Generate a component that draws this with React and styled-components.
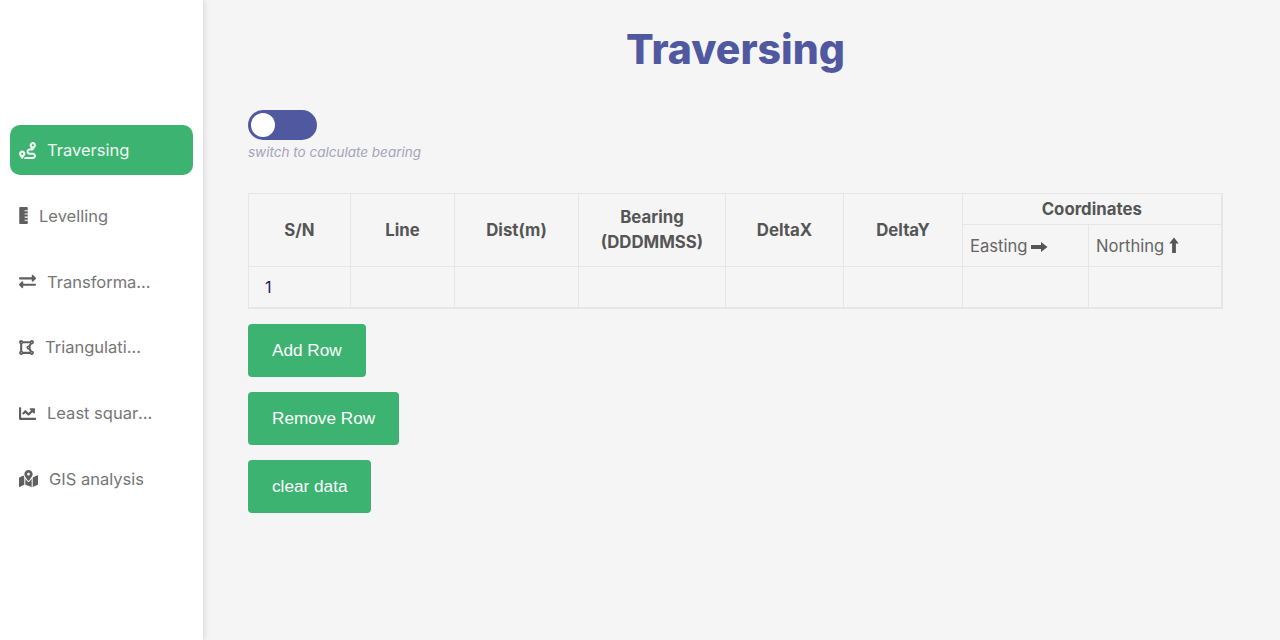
import React from "react";
import styled, { createGlobalStyle } from "styled-components";
import {
  FaRoute,
  FaRulerVertical,
  FaExchangeAlt,
  FaDrawPolygon,
  FaChartLine,
  FaMapMarkedAlt,
} from "react-icons/fa";

const GlobalStyle = createGlobalStyle`
  html, body {
    margin: 0;
    padding: 0;
    background: #f5f5f5;
    font-family: "Inter", "Open Sans", sans-serif;
  }
`;

const Page = styled.div`
  display: flex;
  width: 1280px;
  height: 640px;
  overflow: hidden;
`;

const Sidebar = styled.nav`
  display: flex;
  flex-direction: column;
  gap: 15.8px;
  flex: 0 0 203px;
  box-sizing: border-box;
  padding: 125px 10px 0;
  background: #ffffff;
  box-shadow: 2px 0 5px rgba(0, 0, 0, 0.1);
`;

const NavItem = styled.a`
  display: flex;
  align-items: center;
  gap: 11px;
  height: 50px;
  padding-left: 9px;
  border-radius: 10px;
  font-size: 16.5px;
  background: ${(p) => (p.$active ? "#3cb371" : "transparent")};
  color: ${(p) => (p.$active ? "#f0f8f3" : "#767676")};
  svg {
    flex: none;
    width: ${(p) => p.$iconWidth}px;
    height: 17px;
    color: ${(p) => (p.$active ? "#f0f8f3" : "#5f5f5f")};
  }
`;

const NavLabel = styled.span`
  max-width: ${(p) => p.$clip || 120}px;
  white-space: nowrap;
  overflow: hidden;
  text-overflow: ellipsis;
`;

const Main = styled.main`
  flex: 1;
  padding: 0 57px 0 45px;
`;

const Title = styled.h1`
  margin: 0;
  padding-top: 24px;
  text-align: center;
  font-size: 41px;
  line-height: 50px;
  font-weight: 800;
  color: #5059a0;
`;

const SwitchBlock = styled.div`
  margin-top: 36px;
`;

const Toggle = styled.div`
  display: flex;
  align-items: center;
  box-sizing: border-box;
  width: 69px;
  height: 30px;
  padding-left: 3px;
  border-radius: 15px;
  background: #5059a0;
`;

const Knob = styled.div`
  width: 24px;
  height: 24px;
  border-radius: 50%;
  background: #ffffff;
`;

const Hint = styled.p`
  margin: 3px 0 0;
  font-size: 13.5px;
  line-height: 18px;
  font-style: italic;
  color: #a3a3bc;
`;

const Table = styled.table`
  width: 974px;
  margin-top: 32px;
  border-collapse: collapse;
  table-layout: fixed;
  color: #555555;
  border-style: solid;
  border-color: #e6e6e6;
  border-width: 1px 2px 2px 1px;
`;

const Head = styled.th`
  padding: 0;
  border: 1px solid #e6e6e6;
  font-size: 16.8px;
  line-height: 25px;
  font-weight: 700;
  text-align: center;
`;

const SubHead = styled.td`
  height: 41px;
  padding: 0 0 0 7px;
  border: 1px solid #e6e6e6;
  font-size: 16.6px;
  color: #666666;
  svg {
    margin-left: -1px;
    vertical-align: -1px;
    fill: #555555;
  }
`;

const Cell = styled.td`
  height: 40px;
  padding: 0 0 0 16px;
  border: 1px solid #e6e6e6;
  font-size: 16px;
  color: #1a1a70;
`;

const Actions = styled.div`
  display: flex;
  flex-direction: column;
  align-items: flex-start;
  gap: 15px;
  margin-top: 15px;
`;

const Button = styled.button`
  height: 53px;
  padding: 0 24px;
  border: none;
  border-radius: 4px;
  background: #3cb371;
  color: #ffffff;
  font-family: "Liberation Sans", Arial, sans-serif;
  font-size: 17.2px;
`;

const links = [
  { icon: FaRoute, label: "Traversing", width: 17, active: true },
  { icon: FaRulerVertical, label: "Levelling", width: 9 },
  { icon: FaExchangeAlt, label: "Transformation", width: 17, clip: 106 },
  { icon: FaDrawPolygon, label: "Triangulation", width: 15, clip: 98 },
  { icon: FaChartLine, label: "Least squares", width: 17, clip: 107 },
  { icon: FaMapMarkedAlt, label: "GIS analysis", width: 19 },
];

const widths = [102, 104, 124, 147, 118, 119, 126, 133];
const columns = ["S/N", "Line", "Dist(m)", "Bearing (DDDMMSS)", "DeltaX", "DeltaY"];

const ArrowRight = () => (
  <svg width="17" height="12" viewBox="0 0 17 12">
    <path d="M0 4h10V1l6.5 5-6.5 5V8H0z" />
  </svg>
);

const ArrowUp = () => (
  <svg width="12" height="16" viewBox="0 0 12 17">
    <path d="M4 17V7H1l5-6.5L11 7H8v10z" />
  </svg>
);

export default function App() {
  return (
    <Page>
      <GlobalStyle />
      <Sidebar>
        {links.map(({ icon: Icon, label, width, clip, active }) => (
          <NavItem key={label} $active={active} $iconWidth={width}>
            <Icon />
            <NavLabel $clip={clip}>{label}</NavLabel>
          </NavItem>
        ))}
      </Sidebar>
      <Main>
        <Title>Traversing</Title>
        <SwitchBlock>
          <Toggle>
            <Knob />
          </Toggle>
          <Hint>switch to calculate bearing</Hint>
        </SwitchBlock>
        <Table>
          <colgroup>
            {widths.map((w, i) => (
              <col key={i} style={{ width: w }} />
            ))}
          </colgroup>
          <thead>
            <tr>
              {columns.map((c) => (
                <Head key={c} rowSpan={2}>
                  {c}
                </Head>
              ))}
              <Head colSpan={2} style={{ height: 30 }}>
                Coordinates
              </Head>
            </tr>
            <tr>
              <SubHead>
                Easting <ArrowRight />
              </SubHead>
              <SubHead>
                Northing <ArrowUp />
              </SubHead>
            </tr>
          </thead>
          <tbody>
            <tr>
              <Cell>1</Cell>
              {widths.slice(1).map((_, i) => (
                <Cell key={i} />
              ))}
            </tr>
          </tbody>
        </Table>
        <Actions>
          <Button>Add Row</Button>
          <Button>Remove Row</Button>
          <Button>clear data</Button>
        </Actions>
      </Main>
    </Page>
  );
}
